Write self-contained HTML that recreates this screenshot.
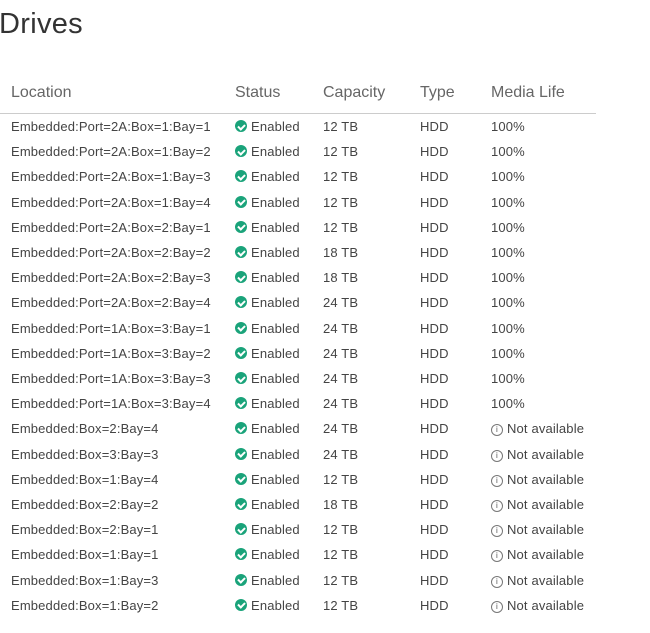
<!DOCTYPE html>
<html><head><meta charset="utf-8"><style>
body{margin:0;background:#fff;font-family:"Liberation Sans",sans-serif;color:#444;width:650px;height:633px;overflow:hidden;position:relative}
h1{position:absolute;left:-1px;top:8px;margin:0;font-weight:normal;font-size:29px;color:#333;letter-spacing:0.3px}
.hdr{position:absolute;top:84px;font-size:16px;color:#666}
.line{position:absolute;left:0;top:113px;width:596px;height:1px;background:#ccc}
.r{position:absolute;left:0;height:25px;width:650px;font-size:13px;line-height:25px;letter-spacing:0.15px}
.r span{position:absolute;top:0;white-space:nowrap}
.ok{display:inline-block;width:12px;height:12px;border-radius:50%;background:#1aa37a;position:absolute;left:235px;top:6px}
.ok:after{content:"";position:absolute;left:3.5px;top:2.5px;width:3px;height:5px;border:solid #fff;border-width:0 2px 2px 0;transform:rotate(45deg)}
.na{display:inline-block;width:10px;height:10px;border:1px solid #777;border-radius:50%;font-size:8px;line-height:10px;text-align:center;vertical-align:1px;margin-right:4px;color:#555;font-style:normal}
</style></head><body>
<h1>Drives</h1>
<div class="hdr" style="left:11px">Location</div>
<div class="hdr" style="left:235px">Status</div>
<div class="hdr" style="left:323px">Capacity</div>
<div class="hdr" style="left:420px">Type</div>
<div class="hdr" style="left:491px">Media Life</div>
<div class="line"></div>
<div id="rows"></div>
<script>
var d=[["Embedded:Port=2A:Box=1:Bay=1","12"],["Embedded:Port=2A:Box=1:Bay=2","12"],["Embedded:Port=2A:Box=1:Bay=3","12"],["Embedded:Port=2A:Box=1:Bay=4","12"],["Embedded:Port=2A:Box=2:Bay=1","12"],["Embedded:Port=2A:Box=2:Bay=2","18"],["Embedded:Port=2A:Box=2:Bay=3","18"],["Embedded:Port=2A:Box=2:Bay=4","24"],["Embedded:Port=1A:Box=3:Bay=1","24"],["Embedded:Port=1A:Box=3:Bay=2","24"],["Embedded:Port=1A:Box=3:Bay=3","24"],["Embedded:Port=1A:Box=3:Bay=4","24"],["Embedded:Box=2:Bay=4","24",1],["Embedded:Box=3:Bay=3","24",1],["Embedded:Box=1:Bay=4","12",1],["Embedded:Box=2:Bay=2","18",1],["Embedded:Box=2:Bay=1","12",1],["Embedded:Box=1:Bay=1","12",1],["Embedded:Box=1:Bay=3","12",1],["Embedded:Box=1:Bay=2","12",1]];
var h="";d.forEach(function(r,i){h+='<div class="r" style="top:'+(114+i*25.2)+'px"><span style="left:11px">'+r[0]+'</span><i class="ok"></i><span style="left:251px">Enabled</span><span style="left:323px">'+r[1]+' TB</span><span style="left:420px">HDD</span><span style="left:491px">'+(r[2]?'<i class="na">i</i>Not available':'100%')+'</span></div>';});
document.getElementById("rows").innerHTML=h;
</script>
</body></html>
